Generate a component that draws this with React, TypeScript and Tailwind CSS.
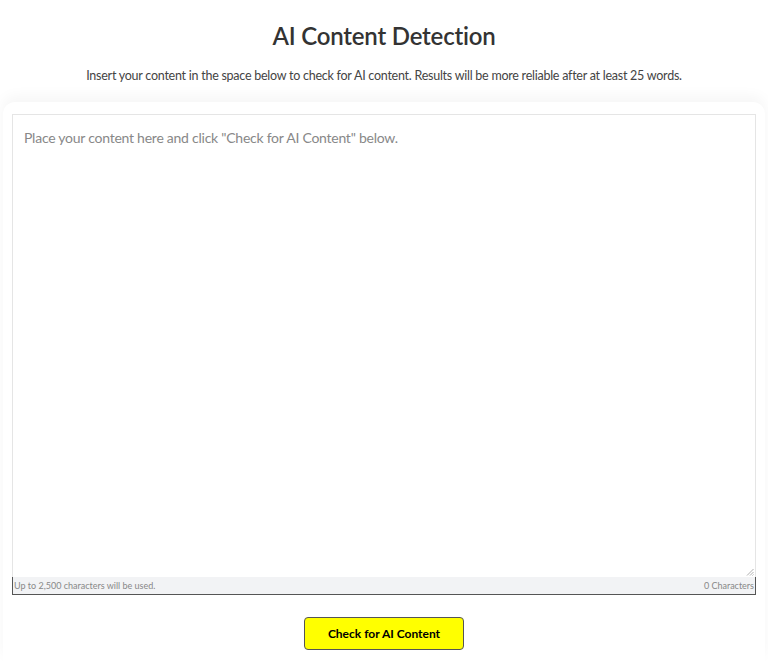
export default function App() {
  return (
    <div className="min-h-[661px] bg-white font-['Lato','Open_Sans',sans-serif] text-[#333]">
      <div className="flex flex-col items-center pt-[20px]">
        <h1 className="text-[24px] font-semibold leading-[32px] tracking-[-0.2px] text-[#333]">AI Content Detection</h1>
        <p className="mt-[15px] text-[12.5px] leading-[18px] tracking-[-0.25px] text-[#444]">
          Insert your content in the space below to check for AI content. Results will be more reliable after at least 25 words.
        </p>
      </div>

      <div className="mx-[3px] mt-[17px] rounded-t-[12px] bg-white px-[9px] pt-[12px] pb-[11px] shadow-[0_-6px_14px_rgba(0,0,0,0.04)]">
        <div className="flex h-[463px] flex-col border border-b-0 border-[#e5e5e5]">
          <div className="px-[11px] pt-[12px] text-[14px] tracking-[-0.25px] text-[#888]">
            Place your content here and click "Check for AI Content" below.
          </div>
          <div className="mt-auto flex justify-end pr-[1px] pb-[1px]">
            <svg width="8" height="8" viewBox="0 0 8 8">
              <path d="M7.5 1 L1 7.5 M7.5 4 L4 7.5 M7.5 6.5 L6.5 7.5" stroke="#999" strokeWidth="0.8" />
            </svg>
          </div>
        </div>
        <div className="flex h-[18px] items-center justify-between border-x border-b border-x-[#555] border-b-[#555] bg-[#f2f3f5] text-[9px] text-[#888]">
          <span className="pl-[1px]">Up to 2,500 characters will be used.</span>
          <span className="pr-[1px]">0 Characters</span>
        </div>

        <div className="mt-[22px] flex justify-center">
          <button className="h-[33px] w-[160px] rounded-[4px] border border-[#555] bg-[#ffff00] text-[12px] font-bold text-black">
            Check for AI Content
          </button>
        </div>
      </div>
    </div>
  );
}
